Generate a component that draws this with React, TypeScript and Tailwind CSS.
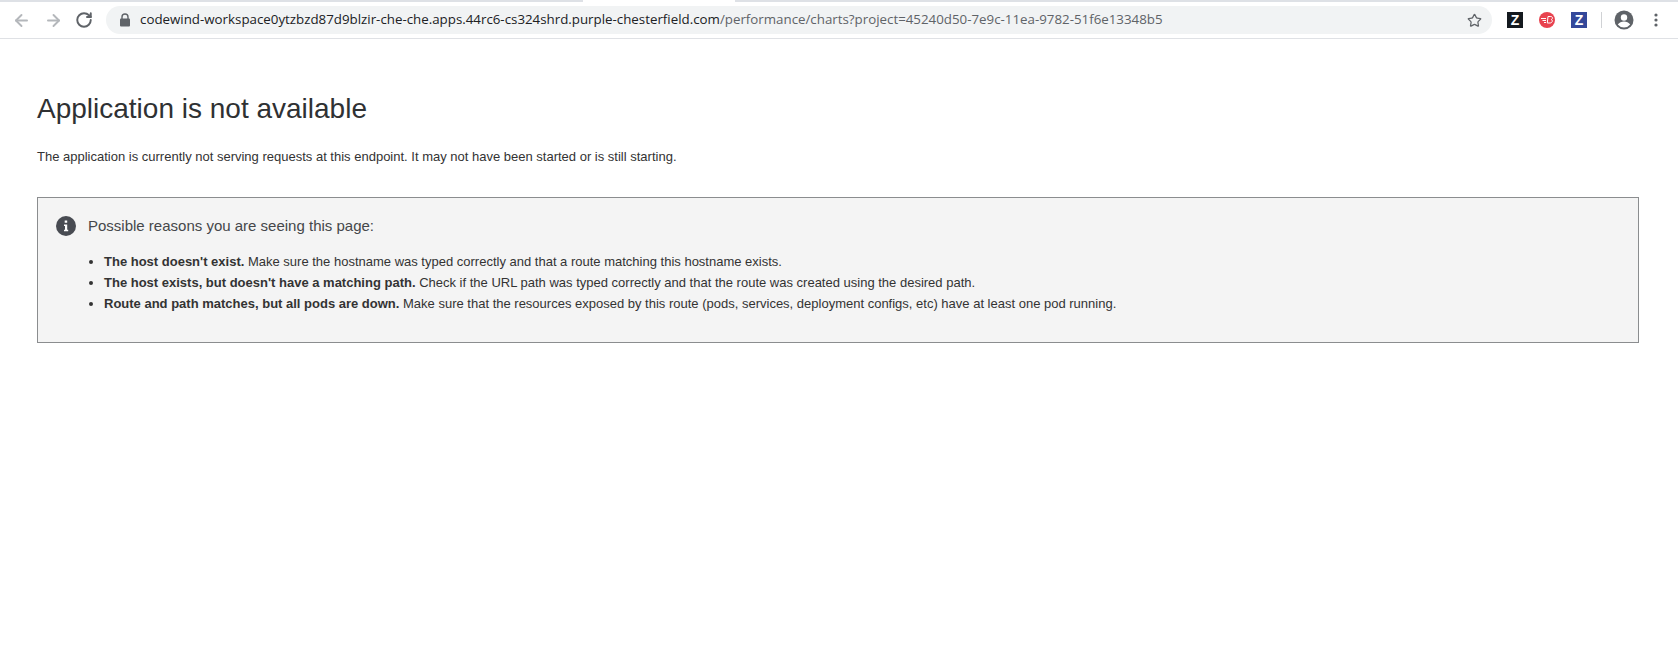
import { ArrowLeft, ArrowRight, RotateCw, Star } from 'lucide-react';

function ExtensionIcons() {
  return (
    <div className="flex items-center">
      <div className="flex h-4 w-4 items-center justify-center bg-[#14191f] font-['Liberation_Sans',sans-serif] text-[14px] font-bold leading-none text-white">
        Z
      </div>
      <svg className="ml-4 h-4 w-4" viewBox="0 0 16 16">
        <circle cx="8" cy="8" r="8" fill="#e8434f" />
        <path d="M2 6.500h5M3.500 8.500h3.500M5 10.500h2" stroke="#fff" strokeWidth="1" />
        <path d="M9 4.500h2.800c1.200 0 1.800.8 1.600 1.800-.1.700-.5 1.100-1 1.300.7.200 1 .8.900 1.600-.2 1.100-1 1.800-2.300 1.800H8.300z" fill="none" stroke="#fff" strokeWidth="1" />
      </svg>
      <div className="ml-4 flex h-4 w-4 items-center justify-center bg-[#34489a] font-['Liberation_Sans',sans-serif] text-[14px] font-bold leading-none text-white">
        Z
      </div>
      <div className="ml-[14px] h-4 w-px bg-[#d0d2d5]" />
      <svg className="ml-3 h-5 w-5" viewBox="0 0 20 20">
        <circle cx="10" cy="10" r="9.500" fill="#5f6368" />
        <circle cx="10" cy="7.500" r="3.200" fill="#fff" />
        <path d="M3.800 14.600c1.400-2 3.800-3 6.200-3s4.800 1 6.200 3a7.900 7.900 0 0 1-12.400 0z" fill="#fff" />
      </svg>
      <svg className="ml-[20px] h-4 w-1" viewBox="0 0 4 16">
        <circle cx="2" cy="3" r="1.600" fill="#5f6368" />
        <circle cx="2" cy="8" r="1.600" fill="#5f6368" />
        <circle cx="2" cy="13" r="1.600" fill="#5f6368" />
      </svg>
    </div>
  );
}

function BrowserBar() {
  return (
    <div className="border-b border-[#dfe1e5]">
      {/* tab strip remnant */}
      <div className="flex h-[2px] bg-[#dee1e6]">
        <div className="ml-[583px] w-[152px] bg-white" />
      </div>
      <div className="flex h-[36px] items-center pl-[12px]">
        <ArrowLeft className="h-[19px] w-[19px] text-[#b4b7bb]" strokeWidth={2.4} />
        <ArrowRight className="ml-[13px] h-[19px] w-[19px] text-[#b4b7bb]" strokeWidth={2.4} />
        <RotateCw className="ml-[12px] h-[18px] w-[18px] text-[#5f6368]" strokeWidth={2.6} />
        <div className="ml-[13px] flex h-[28px] w-[1386px] items-center rounded-full bg-[#f1f3f4] pl-[13px] pr-[10px]">
          <svg className="h-[14px] w-[12px]" viewBox="0 0 12 14">
            <path d="M3 6V4a3 3 0 0 1 6 0v2" fill="none" stroke="#5f6368" strokeWidth="1.400" />
            <rect x="1" y="5.500" width="10" height="8" rx="1" fill="#5f6368" />
          </svg>
          <div className="ml-[9px] flex-1 whitespace-nowrap font-['Open_Sans',sans-serif] text-[13.32px] text-[#5f6368]">
            <span className="text-[#202124]">codewind-workspace0ytzbzd87d9blzir-che-che.apps.44rc6-cs324shrd.purple-chesterfield.com</span>
            /performance/charts?project=45240d50-7e9c-11ea-9782-51f6e13348b5
          </div>
          <Star className="h-[15px] w-[15px] text-[#5f6368]" strokeWidth={2} />
        </div>
        <div className="ml-[15px]">
          <ExtensionIcons />
        </div>
      </div>
    </div>
  );
}

const reasons = [
  {
    title: "The host doesn't exist.",
    text: ' Make sure the hostname was typed correctly and that a route matching this hostname exists.',
  },
  {
    title: "The host exists, but doesn't have a matching path.",
    text: ' Check if the URL path was typed correctly and that the route was created using the desired path.',
  },
  {
    title: 'Route and path matches, but all pods are down.',
    text: ' Make sure that the resources exposed by this route (pods, services, deployment configs, etc) have at least one pod running.',
  },
];

export default function App() {
  return (
    <div className="h-[668px] overflow-hidden bg-white font-['Liberation_Sans',Arial,sans-serif] text-[#333333]">
      <BrowserBar />
      <div className="pl-[37px] pr-[39px]">
        <h1 className="mt-[55px] text-[28px] font-normal leading-[30px] text-[#2f3133]">
          Application is not available
        </h1>
        <p className="mt-[24px] text-[13px] leading-[17px] text-[#333333]">
          The application is currently not serving requests at this endpoint. It may not have been started or is still starting.
        </p>
        <div className="mt-[32px] h-[146px] border border-[#8b8d8f] bg-[#f4f4f4] pl-[18px] pt-[18px]">
          <div className="flex items-center">
            <svg className="h-5 w-5" viewBox="0 0 20 20">
              <circle cx="10" cy="10" r="10" fill="#484b52" />
              <path
                d="M8.700 4.500h2.500v2.300H8.700zM8 8.500h3.200v5.200h1v1.500H8v-1.500h1v-3.700H8z"
                fill="#fff"
              />
            </svg>
            <span className="ml-[12px] text-[15px] leading-[20px] text-[#45474a]">
              Possible reasons you are seeing this page:
            </span>
          </div>
          <ul className="mt-[15px] list-disc pl-[48px] text-[13px] leading-[21px]">
            {reasons.map((r) => (
              <li key={r.title} className="h-[20.800px]">
                <strong className="font-bold">{r.title}</strong>
                {r.text}
              </li>
            ))}
          </ul>
        </div>
      </div>
    </div>
  );
}
